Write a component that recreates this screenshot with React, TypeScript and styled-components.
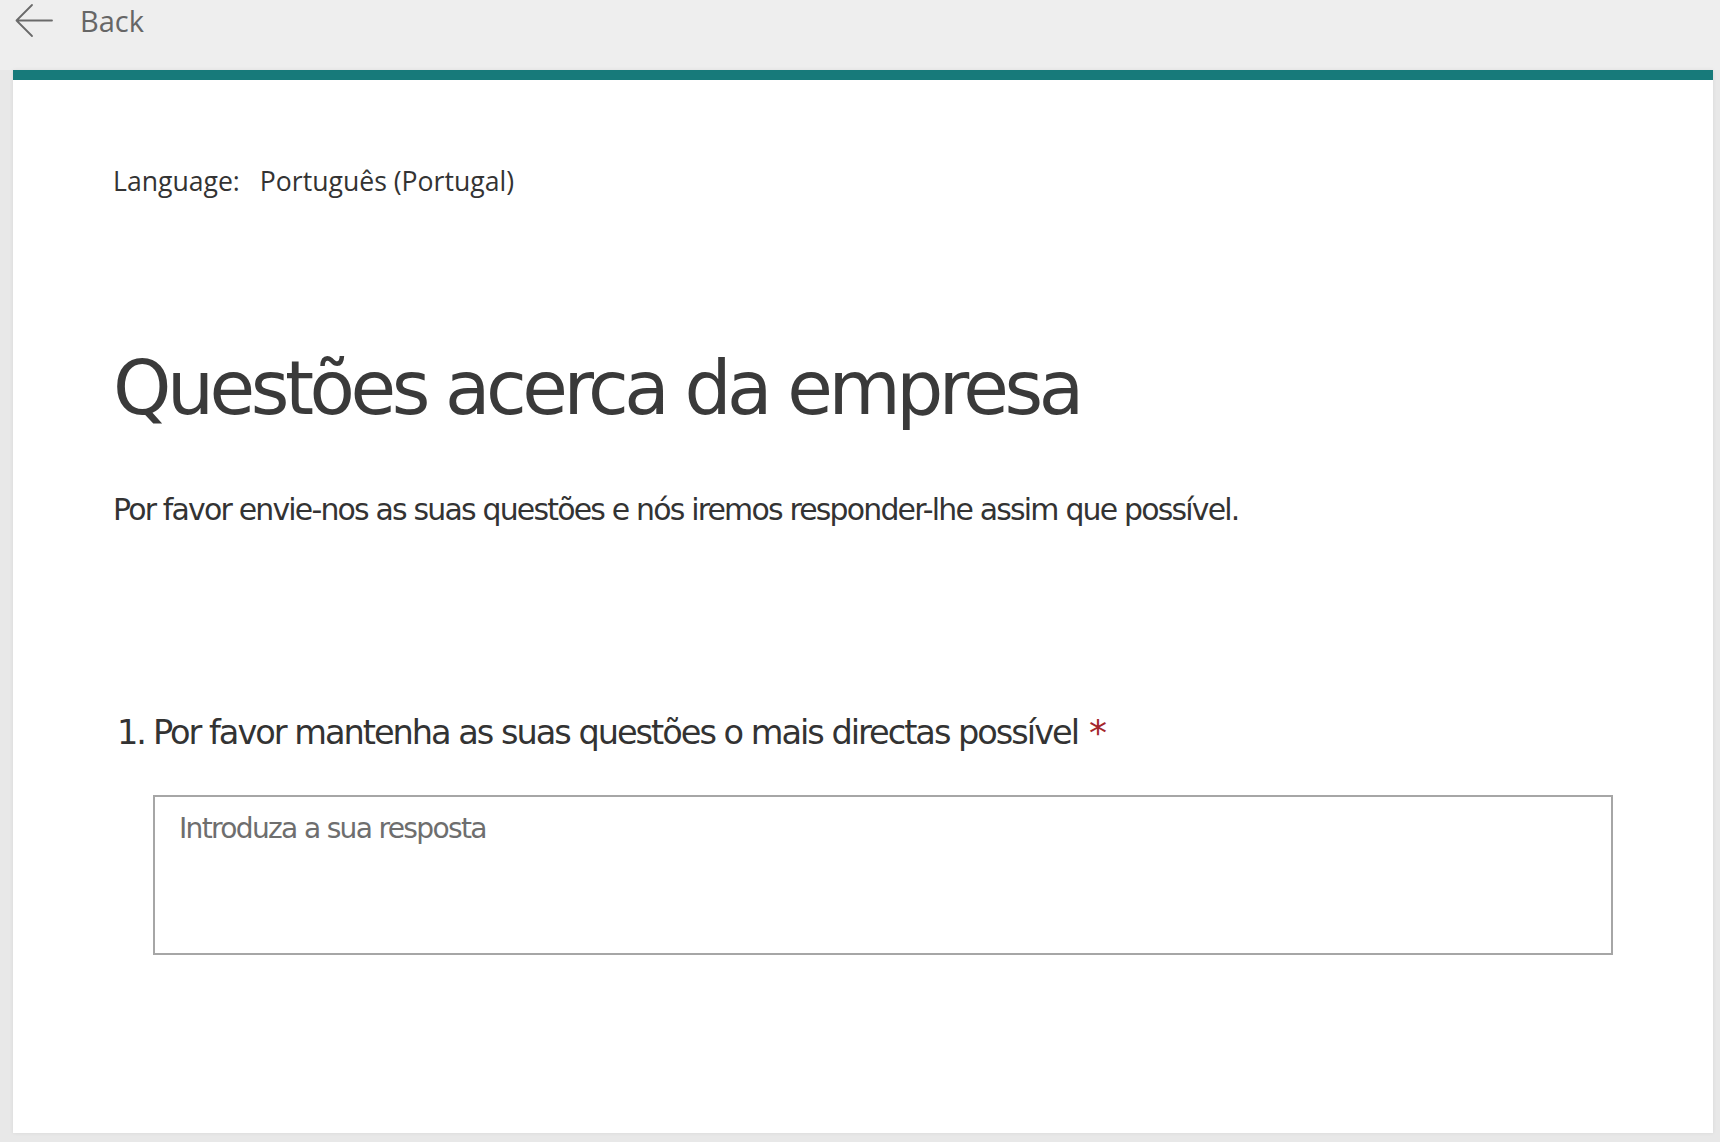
import styled, { createGlobalStyle } from "styled-components";

const GlobalStyle = createGlobalStyle`
  html, body {
    margin: 0;
    padding: 0;
    background-color: #e8e8e8;
  }
  * {
    box-sizing: border-box;
  }
`;

const Page = styled.div`
  min-height: 1142px;
  display: flex;
  flex-direction: column;
`;

const TopBar = styled.header`
  height: 70px;
  flex-shrink: 0;
  display: flex;
  align-items: flex-start;
  padding-left: 15px;
  background-color: #eeeeee;
`;

const BackButton = styled.button`
  height: 38px;
  margin-top: 2px;
  display: flex;
  align-items: center;
  gap: 27px;
  padding: 0;
  border: none;
  background: transparent;
  color: #666666;
  font-family: "Open Sans", "Noto Sans", sans-serif;
  font-size: 29px;
  line-height: 38px;
  cursor: pointer;
  svg {
    display: block;
  }
`;

const Card = styled.main`
  flex: 1;
  margin: 0 7px 9px 13px;
  padding: 83px 100px 0 100px;
  background-color: #ffffff;
  border-top: 10px solid #177a7a;
  box-shadow: 0 0 4px rgba(0, 0, 0, 0.07);
`;

const LanguageRow = styled.div`
  display: flex;
  gap: 20px;
  color: #333333;
  font-family: "Open Sans", "Noto Sans", sans-serif;
  font-size: 26.6px;
  line-height: 36px;
`;

const Title = styled.h1`
  margin: 145px 0 0;
  color: #3a3a3a;
  font-family: "DejaVu Sans", sans-serif;
  font-weight: normal;
  font-size: 74.2px;
  line-height: 88px;
  letter-spacing: -0.06em;
`;

const Description = styled.p`
  margin: 60px 0 0;
  color: #333333;
  font-family: "DejaVu Sans", sans-serif;
  font-size: 29.9px;
  line-height: 36px;
  letter-spacing: -0.06em;
`;

const Question = styled.section`
  margin-top: 185px;
  padding-left: 4px;
`;

const QuestionTitle = styled.div`
  display: flex;
  color: #333333;
  font-family: "DejaVu Sans", sans-serif;
  font-size: 33.6px;
  line-height: 40px;
  letter-spacing: -0.06em;
`;

const Number = styled.span`
  margin-right: 8px;
`;

const Required = styled.span`
  margin-left: 11px;
  color: #a4262c;
  font-size: 36px;
`;

const AnswerBox = styled.textarea`
  display: block;
  width: 1460px;
  height: 160px;
  margin: 42px 0 0 36px;
  padding: 15px 24px;
  border: 2px solid #a6a6a6;
  border-radius: 0;
  background: #ffffff;
  resize: none;
  outline: none;
  color: #333333;
  font-family: "DejaVu Sans", sans-serif;
  font-size: 28.1px;
  line-height: 34px;
  letter-spacing: -0.06em;
  &::placeholder {
    color: #6e6e6e;
  }
`;

const ArrowIcon = () => (
  <svg width="38" height="36" viewBox="0 0 38 36" fill="none">
    <path
      d="M37 17.5H1.5M17 2L1.5 17.5L17 33"
      stroke="#6a6a6a"
      strokeWidth="1.8"
      strokeLinecap="round"
      strokeLinejoin="round"
    />
  </svg>
);

const App = () => {
  return (
    <Page>
      <GlobalStyle />
      <TopBar>
        <BackButton>
          <ArrowIcon />
          <span>Back</span>
        </BackButton>
      </TopBar>
      <Card>
        <LanguageRow>
          <span>Language:</span>
          <span>Português (Portugal)</span>
        </LanguageRow>
        <Title>Questões acerca da empresa</Title>
        <Description>
          Por favor envie-nos as suas questões e nós iremos responder-lhe assim que possível.
        </Description>
        <Question>
          <QuestionTitle>
            <Number>1.</Number>
            <span>Por favor mantenha as suas questões o mais directas possível</span>
            <Required>*</Required>
          </QuestionTitle>
          <AnswerBox placeholder="Introduza a sua resposta" />
        </Question>
      </Card>
    </Page>
  );
};

export default App;
